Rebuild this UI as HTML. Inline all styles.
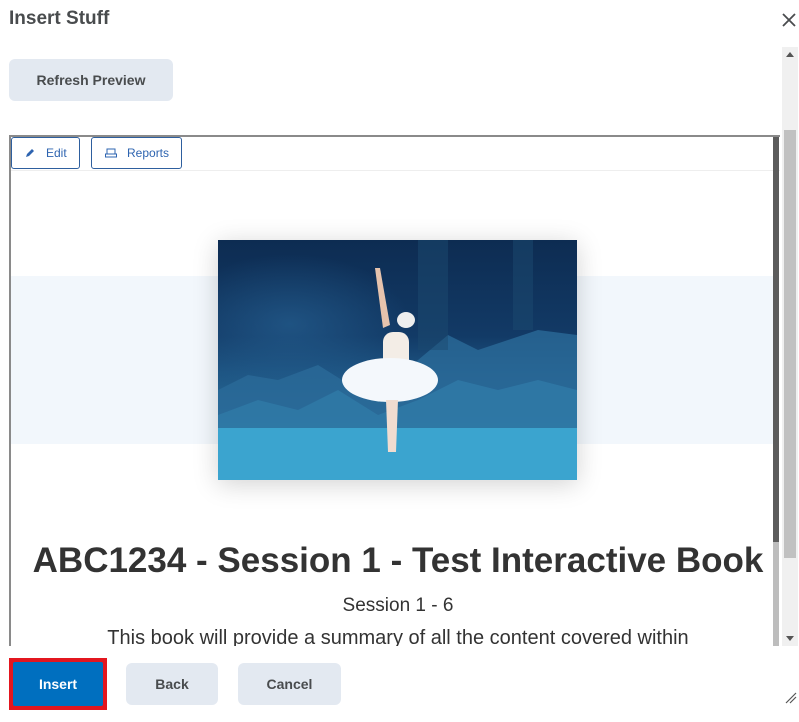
<!DOCTYPE html>
<html><head><style>
*{margin:0;padding:0;box-sizing:border-box}
body{width:799px;height:722px;background:#fff;position:relative;overflow:hidden;font-family:"Liberation Sans",sans-serif}
.h{position:absolute;left:9px;top:8px;font-size:19px;font-weight:bold;color:#494c4e}
.x{position:absolute;left:781px;top:12px;width:16px;height:16px}
.btn{position:absolute;background:#e3e9f1;border-radius:6px;color:#494c4e;font-weight:bold;font-size:14px;display:flex;align-items:center;justify-content:center}
.frame{position:absolute;left:9px;top:135px;width:771px;height:511px;border-top:2px solid #8a8a8a;border-left:2px solid #8a8a8a;overflow:hidden;background:#fff}
.tb{position:absolute;top:0;height:32px;border:1px solid #2e5f9e;border-radius:3px;color:#2e64b0;font-size:12px;display:flex;align-items:center}
.sep{position:absolute;left:0;top:33px;width:100%;height:1px;background:#eee}
.band{position:absolute;left:0;top:139px;width:762px;height:168px;background:#f2f7fc}
.img{position:absolute;left:207px;top:103px;width:359px;height:240px;box-shadow:0 4px 24px rgba(0,0,0,.18);overflow:hidden;
background:radial-gradient(ellipse 120px 70px at 20% 35%,rgba(40,100,150,.6),rgba(40,100,150,0)),linear-gradient(180deg,#0d2c52 0%,#123a66 40%,#1d5482 55%,#2a6d9a 75%,#3e9ccb 82%,#3ba7d2 100%)}
.in{position:absolute;left:762px;top:0;width:6px;height:511px;background:#bdbdbd}
.in div{width:6px;height:405px;background:#5c5c5c}
.t1{position:absolute;left:0;width:774px;text-align:center;color:#333}
.sb{position:absolute;left:782px;top:47px;width:16px;height:599px;background:#f0f0f0}
.sb .th{position:absolute;left:2px;top:83px;width:12px;height:428px;background:#c1c1c1}
</style></head><body>
<div class="h">Insert Stuff</div>
<svg class="x" viewBox="0 0 16 16"><path d="M2 2L14 14M14 2L2 14" stroke="#494c4e" stroke-width="1.8"/></svg>
<div class="btn" style="left:9px;top:59px;width:164px;height:42px">Refresh Preview</div>
<div class="frame">
 <div class="tb" style="left:0;width:69px;padding-left:13px"><svg width="10" height="10" viewBox="0 0 10 10"><path d="M1 9L2 6L7 1L9 3L4 8Z" fill="#2e64b0"/></svg><span style="margin-left:11px">Edit</span></div>
 <div class="tb" style="left:80px;width:91px;padding-left:13px"><svg width="12" height="10" viewBox="0 0 12 10"><rect x="2" y="1" width="8" height="5" fill="none" stroke="#2e64b0"/><rect x="0.5" y="6" width="11" height="3" fill="none" stroke="#2e64b0"/></svg><span style="margin-left:10px">Reports</span></div>
 <div class="sep"></div>
 <div class="band"></div>
 <div class="img">
  <svg style="position:absolute;left:0;top:0" width="359" height="240">
   <path d="M0 150L30 135L60 140L100 125L140 150L170 145L200 120L230 95L260 110L290 100L320 90L359 95L359 190L0 190Z" fill="#2a6a98" opacity=".8"/>
   <path d="M0 175L40 160L80 170L120 150L160 175L200 160L240 140L280 150L320 140L359 150L359 195L0 195Z" fill="#2f7aa8" opacity=".8"/>
   <rect x="0" y="188" width="359" height="52" fill="#3ba4cf"/>
   <rect x="200" y="0" width="30" height="110" fill="#1b4a70" opacity=".5"/>
   <rect x="295" y="0" width="20" height="90" fill="#1b4a70" opacity=".5"/>
   <path d="M157 28L162 28L172 85L165 88Z" fill="#e6c3ad"/>
   <ellipse cx="188" cy="80" rx="9" ry="8" fill="#eee"/>
   <rect x="165" y="92" width="26" height="50" rx="10" fill="#f3ede6"/>
   <ellipse cx="172" cy="140" rx="48" ry="22" fill="#f4f8fc"/>
   <path d="M168 160L180 160L178 212L170 212Z" fill="#f0dcd0"/>
  </svg>
 </div>
 <div class="t1" style="top:404px;font-size:35px;font-weight:bold">ABC1234 - Session 1 - Test Interactive Book</div>
 <div class="t1" style="top:458px;font-size:19px">Session 1 - 6</div>
 <div class="t1" style="top:490px;font-size:20px">This book will provide a summary of all the content covered within</div>
 <div class="in"><div></div></div>
</div>
<div class="sb"><div class="th"></div>
 <svg style="position:absolute;left:4px;top:5px" width="8" height="5"><path d="M0 5L4 0L8 5Z" fill="#555"/></svg>
 <svg style="position:absolute;left:4px;top:589px" width="8" height="5"><path d="M0 0L8 0L4 5Z" fill="#555"/></svg>
</div>
<div style="position:absolute;left:9px;top:658px;width:98px;height:52px;background:#e3161f"></div>
<div class="btn" style="left:13px;top:662px;width:90px;height:44px;background:#006fbf;color:#fff;border-radius:2px">Insert</div>
<div class="btn" style="left:126px;top:663px;width:92px;height:42px">Back</div>
<div class="btn" style="left:238px;top:663px;width:103px;height:42px">Cancel</div>
<svg style="position:absolute;left:785px;top:692px" width="12" height="12"><path d="M1 11L11 1M5 11L11 5" stroke="#555" stroke-width="1.2"/></svg>
</body></html>
